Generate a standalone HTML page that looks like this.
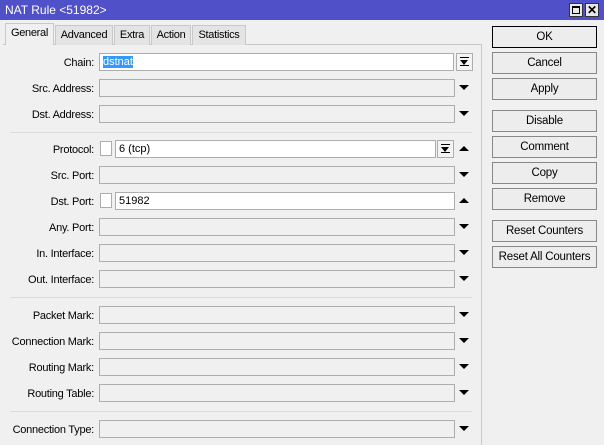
<!DOCTYPE html>
<html><head><style>
*{margin:0;padding:0;box-sizing:border-box}
body{width:604px;height:445px;background:#f0f0f0;font-family:"Liberation Sans",sans-serif;font-size:11px;color:#000;position:relative;overflow:hidden}
.a{position:absolute}
.title{left:0;top:0;width:604px;height:20px;background:#5050c8;color:#fff;font-size:12px;line-height:21px;padding-left:5px}
.wb{top:3px;width:14px;height:14px;background:#e8e8e8;border:1px solid #333;}
.tab{top:25px;height:20px;border:1px solid #c8c8c8;border-bottom:none;background:#e4e4e4;line-height:19px;text-align:center;font-size:11px;letter-spacing:-0.3px;white-space:nowrap}
.lbl{right:510px;width:95px;text-align:right;height:18px;line-height:20px;font-size:11px;letter-spacing:-0.25px;white-space:nowrap}
.in{height:18px;border:1px solid #adadad;background:#f0f0f0;line-height:17px;padding-left:3px}
.w{background:#fff}
.sep{left:10px;width:462px;height:1px;background:#dcdcdc}
.dn{width:0;height:0;border-left:5px solid transparent;border-right:5px solid transparent;border-top:5px solid #000}
.up{width:0;height:0;border-left:5px solid transparent;border-right:5px solid transparent;border-bottom:5px solid #000}
.btn{left:492px;width:105px;height:22px;border:1px solid #888;background:#ededed;text-align:center;line-height:21px;font-size:11.5px;letter-spacing:-0.2px}
.cb{width:12px;height:15px;border:1px solid #adadad;background:#fff}
.db{width:17px;height:18px;border:1px solid #adadad;background:#f4f4f4}
</style></head><body>
<div class="a title">NAT Rule &lt;51982&gt;</div>
<div class="a wb" style="left:569px"><div class="a" style="left:2px;top:2px;width:8px;height:8px;border:1px solid #000;border-top-width:2px"></div></div>
<div class="a wb" style="left:585px;font-weight:bold;font-size:12px;line-height:12px;text-align:center">✕</div>

<div class="a" style="left:3px;top:44px;width:479px;height:401px;border-top:1px solid #c8c8c8;border-right:1px solid #c8c8c8"></div>
<div class="a tab" style="left:5px;top:23px;width:49px;height:22px;background:#f0f0f0;border-color:#c8c8c8">General</div>
<div class="a tab" style="left:55px;width:58px">Advanced</div>
<div class="a tab" style="left:114px;width:36px">Extra</div>
<div class="a tab" style="left:151px;width:40px">Action</div>
<div class="a tab" style="left:192px;width:54px">Statistics</div>

<div class="a lbl" style="top:53px">Chain:</div>
<div class="a in w" style="left:99px;top:53px;width:355px"><span style="background:#3399ff;color:#fff">dstnat</span></div>
<div class="a db" style="left:456px;top:53px"><div class="a" style="left:3px;top:3px;width:9px;height:1px;background:#000"></div><div class="a dn" style="left:3px;top:6px;border-left-width:4.5px;border-right-width:4.5px"></div><div class="a" style="left:3px;top:11px;width:9px;height:1px;background:#000"></div></div>

<div class="a lbl" style="top:79px">Src. Address:</div>
<div class="a in" style="left:99px;top:79px;width:356px"></div>
<div class="a dn" style="left:459px;top:85px"></div>
<div class="a lbl" style="top:105px">Dst. Address:</div>
<div class="a in" style="left:99px;top:105px;width:356px"></div>
<div class="a dn" style="left:459px;top:111px"></div>

<div class="a sep" style="top:132px"></div>

<div class="a lbl" style="top:140px">Protocol:</div>
<div class="a cb" style="left:100px;top:141px"></div>
<div class="a in w" style="left:115px;top:140px;width:321px">6 (tcp)</div>
<div class="a db" style="left:437px;top:140px"><div class="a" style="left:3px;top:3px;width:9px;height:1px;background:#000"></div><div class="a dn" style="left:3px;top:6px;border-left-width:4.5px;border-right-width:4.5px"></div><div class="a" style="left:3px;top:11px;width:9px;height:1px;background:#000"></div></div>
<div class="a up" style="left:459px;top:146px"></div>

<div class="a lbl" style="top:166px">Src. Port:</div>
<div class="a in" style="left:99px;top:166px;width:356px"></div>
<div class="a dn" style="left:459px;top:172px"></div>

<div class="a lbl" style="top:192px">Dst. Port:</div>
<div class="a cb" style="left:100px;top:193px"></div>
<div class="a in w" style="left:115px;top:192px;width:340px">51982</div>
<div class="a up" style="left:459px;top:198px"></div>

<div class="a lbl" style="top:218px">Any. Port:</div>
<div class="a in" style="left:99px;top:218px;width:356px"></div>
<div class="a dn" style="left:459px;top:224px"></div>
<div class="a lbl" style="top:244px">In. Interface:</div>
<div class="a in" style="left:99px;top:244px;width:356px"></div>
<div class="a dn" style="left:459px;top:250px"></div>
<div class="a lbl" style="top:270px">Out. Interface:</div>
<div class="a in" style="left:99px;top:270px;width:356px"></div>
<div class="a dn" style="left:459px;top:276px"></div>

<div class="a sep" style="top:297px"></div>

<div class="a lbl" style="top:306px">Packet Mark:</div>
<div class="a in" style="left:99px;top:306px;width:356px"></div>
<div class="a dn" style="left:459px;top:312px"></div>
<div class="a lbl" style="top:332px">Connection Mark:</div>
<div class="a in" style="left:99px;top:332px;width:356px"></div>
<div class="a dn" style="left:459px;top:338px"></div>
<div class="a lbl" style="top:358px">Routing Mark:</div>
<div class="a in" style="left:99px;top:358px;width:356px"></div>
<div class="a dn" style="left:459px;top:364px"></div>
<div class="a lbl" style="top:384px">Routing Table:</div>
<div class="a in" style="left:99px;top:384px;width:356px"></div>
<div class="a dn" style="left:459px;top:390px"></div>

<div class="a sep" style="top:411px"></div>

<div class="a lbl" style="top:420px">Connection Type:</div>
<div class="a in" style="left:99px;top:420px;width:356px"></div>
<div class="a dn" style="left:459px;top:426px"></div>

<div class="a btn" style="top:26px;border-color:#000">OK</div>
<div class="a btn" style="top:52px">Cancel</div>
<div class="a btn" style="top:78px">Apply</div>
<div class="a btn" style="top:110px">Disable</div>
<div class="a btn" style="top:136px">Comment</div>
<div class="a btn" style="top:162px">Copy</div>
<div class="a btn" style="top:188px">Remove</div>
<div class="a btn" style="top:220px">Reset Counters</div>
<div class="a btn" style="top:246px">Reset All Counters</div>
</body></html>
